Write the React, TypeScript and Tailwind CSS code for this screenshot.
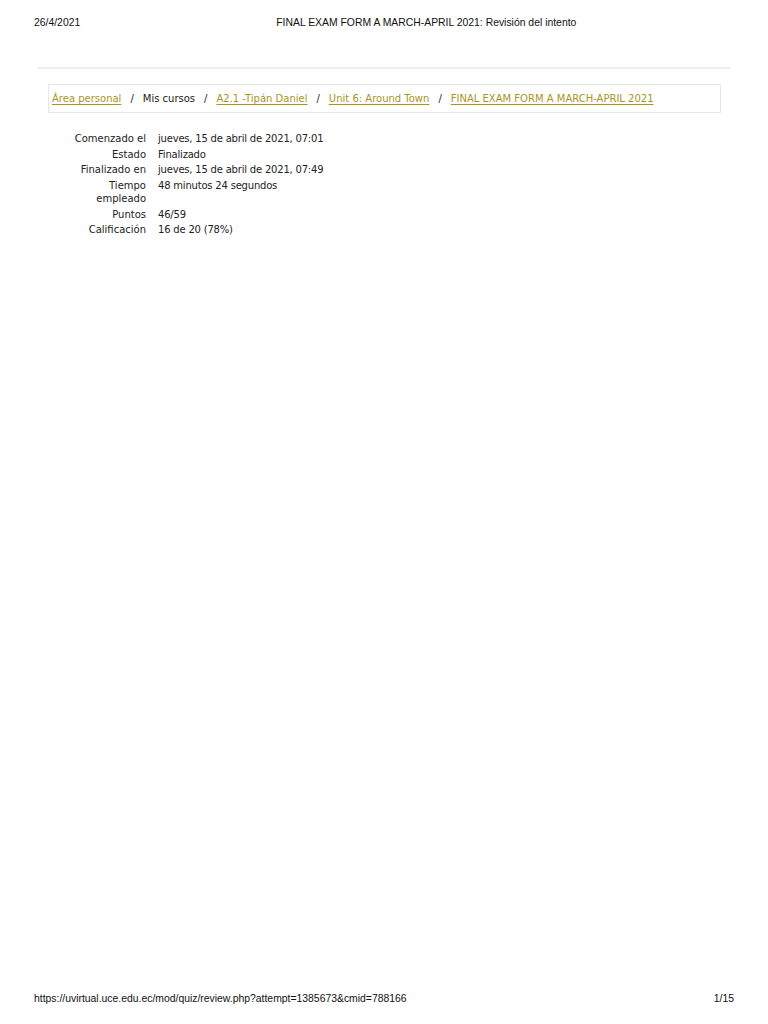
export default function App() {
  const rows = [
    { label: "Comenzado el", value: "jueves, 15 de abril de 2021, 07:01" },
    { label: "Estado", value: "Finalizado" },
    { label: "Finalizado en", value: "jueves, 15 de abril de 2021, 07:49" },
    { label: "Tiempo empleado", value: "48 minutos 24 segundos" },
    { label: "Puntos", value: "46/59" },
    { label: "Calificación", value: "16 de 20 (78%)" },
  ];

  return (
    <div className="relative flex h-[1024px] w-[768px] flex-col bg-white text-black">
      {/* print header */}
      <div className="flex h-[46px] items-center px-[34px] font-['Liberation_Sans',sans-serif] text-[10.4px] text-[#111]">
        <span>26/4/2021</span>
        <span className="ml-[196px]">FINAL EXAM FORM A MARCH-APRIL 2021: Revisión del intento</span>
      </div>

      <div className="mx-[37px] mt-[21px] h-[2px] w-[694px] bg-[#efefef]" />

      {/* breadcrumb */}
      <div className="ml-[48px] mt-[15px] flex h-[29px] w-[673px] items-center gap-[9px] border border-[#e6e6e6] px-[3px] font-['DejaVu_Sans',sans-serif] text-[10px] text-[#222]">
        <a className="text-[#a8961c] underline underline-offset-2">Área personal</a>
        <span>/</span>
        <span>Mis cursos</span>
        <span>/</span>
        <a className="text-[#a8961c] underline underline-offset-2">A2.1 -Tipán Daniel</a>
        <span>/</span>
        <a className="text-[#a8961c] underline underline-offset-2">Unit 6: Around Town</a>
        <span>/</span>
        <a className="text-[#a8961c] underline underline-offset-2">FINAL EXAM FORM A MARCH-APRIL 2021</a>
      </div>

      {/* summary table */}
      <div className="mt-[19px] grid grid-cols-[98px_1fr] gap-x-[12px] gap-y-[2px] pl-[48px] font-['DejaVu_Sans',sans-serif] text-[10px] leading-[13.5px] text-[#222]">
        {rows.map((r) => (
          <div key={r.label} className="contents">
            <div className="text-right">
              {r.label === "Tiempo empleado" ? (
                <>
                  Tiempo
                  <br />
                  empleado
                </>
              ) : (
                r.label
              )}
            </div>
            <div className="tracking-[-0.2px]">{r.value}</div>
          </div>
        ))}
      </div>

      <div className="flex-1" />

      {/* print footer */}
      <div className="flex h-[41px] items-start justify-between px-[34px] pt-[8px] font-['Liberation_Sans',sans-serif] text-[10.4px] text-[#111]">
        <span>https://uvirtual.uce.edu.ec/mod/quiz/review.php?attempt=1385673&amp;cmid=788166</span>
        <span>1/15</span>
      </div>
    </div>
  );
}
